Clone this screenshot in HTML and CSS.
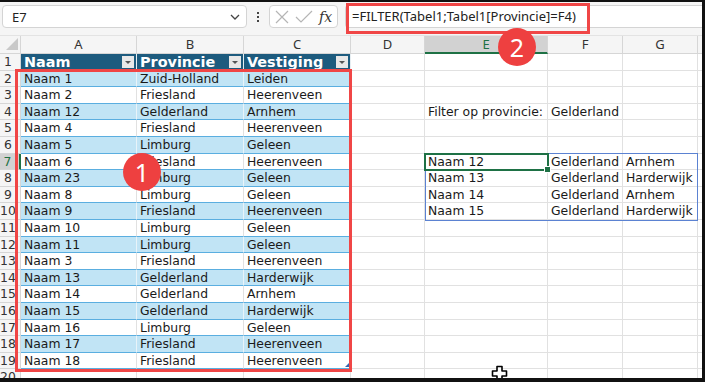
FILE: index.html
```html
<!DOCTYPE html>
<html>
<head>
<meta charset="utf-8">
<link rel="stylesheet" href="styles.css">
</head>
<body>
<div class="frame">
  <div class="toolbar">
    <div class="namebox"><span>E7</span>
      <svg width="10" height="6" viewBox="0 0 10 6"><path d="M1 1 L5 5 L9 1" fill="none" stroke="#444" stroke-width="1.3"/></svg>
    </div>
    <div class="dots"><i></i><i></i><i></i></div>
    <div class="fxbox">
      <svg width="16" height="14" viewBox="0 0 16 14"><path d="M2 1 L14 13 M14 1 L2 13" stroke="#b5b5b5" stroke-width="1.2"/></svg>
      <svg width="18" height="14" viewBox="0 0 18 14"><path d="M1 7 L6 12 L17 1" fill="none" stroke="#b5b5b5" stroke-width="1.2"/></svg>
      <span class="fx">fx</span>
    </div>
    <div class="formula">=FILTER(Tabel1;Tabel1[Provincie]=F4)</div>
  </div>

  <div class="sheet">
    <div class="row colhdr">
      <div class="c corner"><svg width="12" height="12" viewBox="0 0 12 12"><path d="M12 0 L12 12 L0 12 Z" fill="#c9c9c9"/></svg></div>
      <div class="c ch">A</div><div class="c ch">B</div><div class="c ch">C</div><div class="c ch">D</div><div class="c ch sel">E</div><div class="c ch">F</div><div class="c ch">G</div><div class="c ch pad"></div>
    </div>
    <div class="row hdrrow">
      <div class="c rh">1</div>
      <div class="c th"><span>Naam</span><b class="dd"></b></div>
      <div class="c th"><span>Provincie</span><b class="dd"></b></div>
      <div class="c th"><span>Vestiging</span><b class="dd"></b></div>
      <div class="c"></div><div class="c"></div><div class="c"></div><div class="c"></div><div class="c pad"></div>
    </div>
    <div class="row band"><div class="c rh">2</div><div class="c t">Naam 1</div><div class="c t">Zuid-Holland</div><div class="c t">Leiden</div><div class="c"></div><div class="c"></div><div class="c"></div><div class="c"></div><div class="c pad"></div></div>
    <div class="row"><div class="c rh">3</div><div class="c t">Naam 2</div><div class="c t">Friesland</div><div class="c t">Heerenveen</div><div class="c"></div><div class="c"></div><div class="c"></div><div class="c"></div><div class="c pad"></div></div>
    <div class="row band"><div class="c rh">4</div><div class="c t">Naam 12</div><div class="c t">Gelderland</div><div class="c t">Arnhem</div><div class="c"></div><div class="c">Filter op provincie:</div><div class="c">Gelderland</div><div class="c"></div><div class="c pad"></div></div>
    <div class="row"><div class="c rh">5</div><div class="c t">Naam 4</div><div class="c t">Friesland</div><div class="c t">Heerenveen</div><div class="c"></div><div class="c"></div><div class="c"></div><div class="c"></div><div class="c pad"></div></div>
    <div class="row band"><div class="c rh">6</div><div class="c t">Naam 5</div><div class="c t">Limburg</div><div class="c t">Geleen</div><div class="c"></div><div class="c"></div><div class="c"></div><div class="c"></div><div class="c pad"></div></div>
    <div class="row"><div class="c rh selrow">7</div><div class="c t">Naam 6</div><div class="c t">Friesland</div><div class="c t">Heerenveen</div><div class="c"></div><div class="c">Naam 12</div><div class="c">Gelderland</div><div class="c">Arnhem</div><div class="c pad"></div></div>
    <div class="row band"><div class="c rh">8</div><div class="c t">Naam 23</div><div class="c t">Limburg</div><div class="c t">Geleen</div><div class="c"></div><div class="c">Naam 13</div><div class="c">Gelderland</div><div class="c">Harderwijk</div><div class="c pad"></div></div>
    <div class="row"><div class="c rh">9</div><div class="c t">Naam 8</div><div class="c t">Limburg</div><div class="c t">Geleen</div><div class="c"></div><div class="c">Naam 14</div><div class="c">Gelderland</div><div class="c">Arnhem</div><div class="c pad"></div></div>
    <div class="row band"><div class="c rh">10</div><div class="c t">Naam 9</div><div class="c t">Friesland</div><div class="c t">Heerenveen</div><div class="c"></div><div class="c">Naam 15</div><div class="c">Gelderland</div><div class="c">Harderwijk</div><div class="c pad"></div></div>
    <div class="row"><div class="c rh">11</div><div class="c t">Naam 10</div><div class="c t">Limburg</div><div class="c t">Geleen</div><div class="c"></div><div class="c"></div><div class="c"></div><div class="c"></div><div class="c pad"></div></div>
    <div class="row band"><div class="c rh">12</div><div class="c t">Naam 11</div><div class="c t">Limburg</div><div class="c t">Geleen</div><div class="c"></div><div class="c"></div><div class="c"></div><div class="c"></div><div class="c pad"></div></div>
    <div class="row"><div class="c rh">13</div><div class="c t">Naam 3</div><div class="c t">Friesland</div><div class="c t">Heerenveen</div><div class="c"></div><div class="c"></div><div class="c"></div><div class="c"></div><div class="c pad"></div></div>
    <div class="row band"><div class="c rh">14</div><div class="c t">Naam 13</div><div class="c t">Gelderland</div><div class="c t">Harderwijk</div><div class="c"></div><div class="c"></div><div class="c"></div><div class="c"></div><div class="c pad"></div></div>
    <div class="row"><div class="c rh">15</div><div class="c t">Naam 14</div><div class="c t">Gelderland</div><div class="c t">Arnhem</div><div class="c"></div><div class="c"></div><div class="c"></div><div class="c"></div><div class="c pad"></div></div>
    <div class="row band"><div class="c rh">16</div><div class="c t">Naam 15</div><div class="c t">Gelderland</div><div class="c t">Harderwijk</div><div class="c"></div><div class="c"></div><div class="c"></div><div class="c"></div><div class="c pad"></div></div>
    <div class="row"><div class="c rh">17</div><div class="c t">Naam 16</div><div class="c t">Limburg</div><div class="c t">Geleen</div><div class="c"></div><div class="c"></div><div class="c"></div><div class="c"></div><div class="c pad"></div></div>
    <div class="row band"><div class="c rh">18</div><div class="c t">Naam 17</div><div class="c t">Friesland</div><div class="c t">Heerenveen</div><div class="c"></div><div class="c"></div><div class="c"></div><div class="c"></div><div class="c pad"></div></div>
    <div class="row"><div class="c rh">19</div><div class="c t">Naam 18</div><div class="c t">Friesland</div><div class="c t last">Heerenveen</div><div class="c"></div><div class="c"></div><div class="c"></div><div class="c"></div><div class="c pad"></div></div>
    <div class="row"><div class="c rh">20</div><div class="c"></div><div class="c"></div><div class="c"></div><div class="c"></div><div class="c"></div><div class="c"></div><div class="c"></div><div class="c pad"></div></div>
  </div>

  <div class="spill"></div>
  <div class="active"><i></i></div>
  <div class="mark rect1"></div>
  <div class="mark rect2"></div>
  <div class="badge b1">1</div>
  <div class="badge b2">2</div>
  <svg class="cursor" width="17" height="17" viewBox="0 0 17 17"><path d="M6 1.5 H11 V6 H15.5 V11 H11 V15.5 H6 V11 H1.5 V6 H6 Z" fill="#fff" stroke="#000" stroke-width="1.6" stroke-linejoin="round"/></svg>
</div>
</body>
</html>
```

FILE: styles.css
```css
body {
  margin: 0;
}
.frame {
  position: relative;
  width: 705px;
  height: 382px;
  box-sizing: border-box;
  border-top: 2px solid #111;
  border-right: 3px solid #111;
  border-bottom: 4px solid #111;
  background: #fff;
  overflow: hidden;
  font-family: "DejaVu Sans", sans-serif;
}
.toolbar {
  height: 34px;
  box-sizing: border-box;
  background: #f5f5f5;
  display: flex;
  align-items: flex-start;
  padding: 3px 0 0 2px;
  border-bottom: 1px solid #e3e3e3;
}
.namebox {
  width: 245px;
  height: 23px;
  box-sizing: border-box;
  background: #fff;
  border: 1px solid #d4d4d4;
  border-radius: 4px;
  display: flex;
  align-items: center;
  justify-content: space-between;
  padding: 0 6px 0 9px;
  font-family: "Noto Sans", sans-serif;
  font-size: 13px;
  color: #222;
}
.dots {
  width: 22px;
  height: 23px;
  display: flex;
  flex-direction: column;
  align-items: center;
  justify-content: center;
  gap: 2px;
}
.dots i {
  width: 2px;
  height: 2px;
  background: #444;
}
.fxbox {
  width: 69px;
  height: 23px;
  box-sizing: border-box;
  background: #fff;
  border: 1px solid #d4d4d4;
  border-radius: 4px;
  display: flex;
  align-items: center;
  gap: 5px;
  padding-left: 4px;
}
.fx {
  font-family: "DejaVu Serif", serif;
  font-style: italic;
  font-size: 14px;
  color: #333;
  margin-left: 1px;
}
.formula {
  flex: 1;
  margin-left: 7px;
  height: 23px;
  box-sizing: border-box;
  background: #fff;
  border: 1px solid #d4d4d4;
  border-right: none;
  border-radius: 4px 0 0 4px;
  padding-left: 6px;
  font-family: "Noto Sans", sans-serif;
  font-size: 13px;
  line-height: 21px;
  color: #222;
}
.sheet {
  display: flex;
  flex-direction: column;
}
.row {
  display: grid;
  grid-template-columns: 21px 116px 107px 107px 74px 123px 75px 75px 4px;
  height: 16.6px;
  font-size: 12.4px;
  line-height: 16.6px;
  color: #1a1a1a;
}
.row.colhdr {
  height: 18px;
  line-height: 17px;
  background: #f5f5f5;
}
.c {
  box-sizing: border-box;
  border-right: 1px solid #e1e1e1;
  border-bottom: 1px solid #e1e1e1;
  padding-left: 3px;
  white-space: nowrap;
  overflow: hidden;
}
.c.pad {
  border-right: none;
}
.colhdr .c {
  border-color: #d6d6d6;
  padding-left: 0;
}
.corner {
  display: flex;
  align-items: flex-end;
  justify-content: flex-end;
  padding: 0 2px 3px 0;
}
.ch {
  text-align: center;
  font-family: "Noto Sans", sans-serif;
  font-size: 13px;
  color: #333;
}
.ch.sel {
  background: #d2d2d2;
  color: #1e7145;
  border-bottom: 2px solid #1e7145;
}
.rh {
  background: #f5f5f5;
  border-color: #d6d6d6;
  padding: 0 4px 0 0;
  text-align: center;
  font-size: 12.4px;
  color: #333;
}
.rh.selrow {
  background: #d2d2d2;
  border-right: 2px solid #1e7145;
  color: #1e7145;
}
.th {
  background: #1d5b7e;
  color: #fff;
  font-weight: bold;
  font-size: 14.4px;
  display: flex;
  align-items: center;
  justify-content: space-between;
  padding-right: 2px;
  border-right-color: #e6eef2;
  border-bottom-color: #5aaee0;
}
.dd {
  width: 12px;
  height: 12px;
  flex: none;
  background: #e8e8e8;
  position: relative;
}
.dd::after {
  content: "";
  position: absolute;
  left: 3px;
  top: 5px;
  border-left: 3px solid transparent;
  border-right: 3px solid transparent;
  border-top: 3px solid #555;
}
.t {
  border-bottom-color: #5aaee0;
}
.band .t {
  background: #c1e4f5;
  border-right-color: #e8f3f9;
}
.t.last {
  position: relative;
}
.t.last::after {
  content: "";
  position: absolute;
  right: 1px;
  bottom: 1px;
  border-left: 4px solid transparent;
  border-bottom: 4px solid #3366b0;
}
.spill {
  position: absolute;
  left: 425px;
  top: 151px;
  width: 273px;
  height: 68px;
  box-sizing: border-box;
  border: 1px solid #5b82d2;
}
.active {
  position: absolute;
  left: 424px;
  top: 151px;
  width: 125px;
  height: 18px;
  box-sizing: border-box;
  border: 2px solid #1e7145;
}
.active i {
  position: absolute;
  right: -4px;
  bottom: -4px;
  width: 5px;
  height: 5px;
  background: #1e7145;
  border: 1px solid #fff;
}
.mark {
  position: absolute;
  box-sizing: border-box;
  border: 3px solid #f04646;
}
.rect1 {
  left: 15px;
  top: 67px;
  width: 337px;
  height: 303px;
}
.rect2 {
  left: 346px;
  top: 1px;
  width: 244px;
  height: 31px;
}
.badge {
  position: absolute;
  width: 38px;
  height: 38px;
  border-radius: 50%;
  background: #ee4040;
  color: #fff;
  font-family: "Noto Sans", sans-serif;
  font-size: 25px;
  line-height: 38px;
  text-align: center;
}
.b1 {
  left: 123px;
  top: 151px;
}
.b2 {
  left: 498px;
  top: 26px;
}
.cursor {
  position: absolute;
  left: 491px;
  top: 363px;
}
```
